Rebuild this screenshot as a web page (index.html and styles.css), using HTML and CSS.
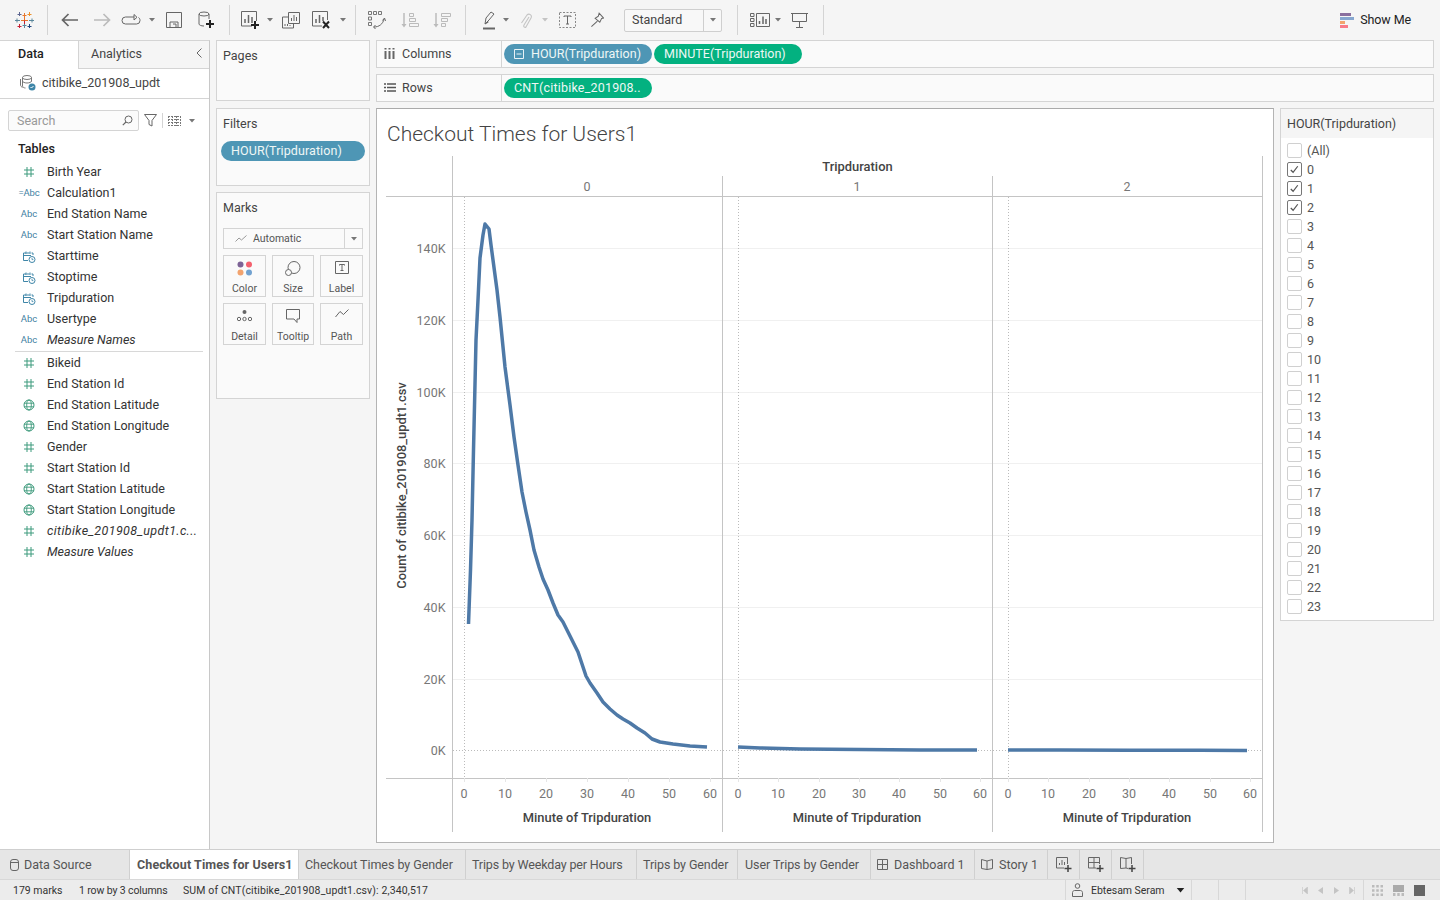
FILE: index.html
```html
<!DOCTYPE html>
<html lang="en">
<head>
<meta charset="utf-8">
<title>Checkout Times for Users1</title>
<link rel="stylesheet" href="styles.css">
</head>
<body>
<svg class="defs" width="0" height="0" aria-hidden="true">
  <symbol id="hash" viewBox="0 0 12 12"><path d="M4 1v10M8 1v10M1 4h10M1 8h10" fill="none" stroke="#3d9a7c" stroke-width="1"/></symbol>
  <symbol id="dt" viewBox="0 0 14 14"><path d="M4 4H1.500v7.500H6M9.500 4H11v2M1.500 6.500H9M4 2.500v2.500M8 2.500v2.500M4.500 4h3" fill="none" stroke="#3f86a8" stroke-width="1"/><circle cx="10" cy="10.500" r="3" fill="#fff" stroke="#3f86a8"/><path d="M10 9v1.600h1.400" fill="none" stroke="#3f86a8" stroke-width=".8"/></symbol>
  <symbol id="globe" viewBox="0 0 12 12"><circle cx="6" cy="6" r="5" fill="none" stroke="#3d9a7c"/><ellipse cx="6" cy="6" rx="2.300" ry="5" fill="none" stroke="#3d9a7c" stroke-width=".9"/><path d="M1 4.200h10M1 7.800h10" stroke="#3d9a7c" stroke-width=".9"/></symbol>
  <symbol id="caret" viewBox="0 0 6 4"><path d="M0 0h6L3 3.500z" fill="#777"/></symbol>
  <symbol id="caretl" viewBox="0 0 6 4"><path d="M0 0h6L3 3.500z" fill="#c4c4c4"/></symbol>
  <symbol id="check" viewBox="0 0 14 14"><path d="M3 7.500l2.500 2.500 5-6.500" fill="none" stroke="#555" stroke-width="1.300"/></symbol>
</svg>

<header class="toolbar">
  <span class="ti w33"><svg width="19" height="19" viewBox="0 0 19 19"><g fill="none"><path d="M9.500 2V7M7.500 4.500h4" stroke="#e8762b"/><path d="M9.500 12v5M7.500 14.500h4" stroke="#5b879b"/><path d="M2 7.500v4M0 9.500h5" stroke="#59879b"/><path d="M17 7.500v4M14 9.500h5" stroke="#59879b"/><path d="M4.500 1v4M2.500 3.500h4" stroke="#5b6591"/><path d="M14.500 1v4M12.500 3.500h4" stroke="#eb912b"/><path d="M4.500 13v4M2.500 15.500h4" stroke="#c72035"/><path d="M14.500 13v4M12.500 15.500h4" stroke="#1f457e"/><path d="M9.500 6v3.500M6 9.500h7" stroke="#e8762b"/><path d="M9.500 9.500V13" stroke="#c72035"/></g></svg></span>
  <i class="sep"></i>
  <span class="ti w32"><svg width="18" height="14" viewBox="0 0 18 14"><path d="M17 7H2M7.500 1L1.500 7l6 6" fill="none" stroke="#666" stroke-width="1.700"/></svg></span>
  <span class="ti w32"><svg width="18" height="14" viewBox="0 0 18 14"><path d="M1 7h15M10.500 1l6 6-6 6" fill="none" stroke="#bbb" stroke-width="1.700"/></svg></span>
  <span class="ti w26"><svg width="20" height="12" viewBox="0 0 20 12"><path d="M13 3H4.500a3.500 3.500 0 0 0 0 7h11a3.500 3.500 0 0 0 3.500-3.500c0-1.500-.6-2.500-1.500-3M13 .5V6l3-2.700z" fill="none" stroke="#666"/></svg></span>
  <span class="ti w16"><svg class="car" viewBox="0 0 6 4"><use href="#caret"/></svg></span>
  <span class="ti w28"><svg width="16" height="16" viewBox="0 0 16 16"><path d="M.5.500h15v15H.5zM4 15.500V10h8v5.500M7 12h3v3.500" fill="none" stroke="#666"/></svg></span>
  <span class="ti w35"><svg width="16" height="18" viewBox="0 0 16 18"><ellipse cx="6" cy="3" rx="5" ry="2" fill="none" stroke="#666"/><path d="M1 3v10c0 1 2 2 5 2M11 3v5" fill="none" stroke="#666"/><path d="M12 9v8M8 13h8" stroke="#222" stroke-width="2"/></svg></span>
  <i class="sep"></i>
  <span class="ti w28"><svg width="19" height="18" viewBox="0 0 19 18"><path d="M11 15H.5V.5h15V10" fill="none" stroke="#666"/><path d="M4 12V8M7.500 12V4M11 12V6" stroke="#666" stroke-width="1.500"/><path d="M14 10v8M10 14h8" stroke="#222" stroke-width="2"/></svg></span>
  <span class="ti w12"><svg class="car" viewBox="0 0 6 4"><use href="#caret"/></svg></span>
  <span class="ti w30"><svg width="18" height="17" viewBox="0 0 18 17"><path d="M6 5H.5v11h11v-4.500" fill="none" stroke="#666"/><path d="M6.500.5h11v11h-11z" fill="#f5f5f5" stroke="#666"/><path d="M9.500 9V6M12 9V3M14.500 9V5M3 14v-2M5.500 14v-2M8 14v-1" stroke="#666"/></svg></span>
  <span class="ti w30"><svg width="19" height="18" viewBox="0 0 19 18"><path d="M10 15H.5V.5h15V9" fill="none" stroke="#666"/><path d="M4 12V8M7.500 12V4M11 10V6" stroke="#666" stroke-width="1.500"/><path d="M11 10.500l6 6.500M17 10.500l-6 6.500" stroke="#222" stroke-width="2"/></svg></span>
  <span class="ti w13"><svg class="car" viewBox="0 0 6 4"><use href="#caret"/></svg></span>
  <i class="sep"></i>
  <span class="ti w30"><svg width="18" height="18" viewBox="0 0 18 18"><path d="M.5.500h3v3h-3zM5.500.500h3v3h-3zM10.500.500h3v3h-3zM.5 6h3v3h-3zM.5 11.500h3v3h-3z" fill="none" stroke="#777"/><path d="M6 16c5 0 9-3 10-8M14.500 9.500L16.500 7l1 3M7.500 14l-2 2 2 2" fill="none" stroke="#666"/></svg></span>
  <span class="ti w36"><svg width="18" height="17" viewBox="0 0 18 17"><path d="M3 1v12" stroke="#bbb" stroke-width="1.500"/><path d="M.5 12L3 15.500 5.500 12z" fill="#bbb"/><path d="M8.500 1.500h4v3h-4zM8.500 6.500h6v3h-6zM8.500 11.500h9v3h-9z" fill="none" stroke="#bbb"/></svg></span>
  <span class="ti w28"><svg width="18" height="17" viewBox="0 0 18 17"><path d="M3 1v12" stroke="#bbb" stroke-width="1.500"/><path d="M.5 12L3 15.500 5.500 12z" fill="#bbb"/><path d="M8.500 1.500h9v3h-9zM8.500 6.500h6v3h-6zM8.500 11.500h4v3h-4z" fill="none" stroke="#bbb"/></svg></span>
  <i class="sep sep-wide"></i>
  <span class="ti w26"><svg width="14" height="19" viewBox="0 0 14 19"><path d="M3 13l1-6 5-6 3 2-5 6z" fill="none" stroke="#666"/><path d="M3 13l3.500-2" stroke="#666"/><path d="M1 17.500h12" stroke="#666" stroke-width="2"/></svg></span>
  <span class="ti w8"><svg class="car" viewBox="0 0 6 4"><use href="#caret"/></svg></span>
  <span class="ti w31"><svg width="12" height="17" viewBox="0 0 12 17"><path d="M9 5L4 13c-1 2 1 3 2 2l5-9c1.500-3-2-5-4-3L1.500 11" fill="none" stroke="#c4c4c4" stroke-width="1.100"/></svg></span>
  <span class="ti w8"><svg class="car" viewBox="0 0 6 4"><use href="#caretl"/></svg></span>
  <span class="ti w36"><svg width="17" height="16" viewBox="0 0 17 16"><rect x=".5" y=".5" width="16" height="15" fill="none" stroke="#888" stroke-dasharray="2 1.500"/><path d="M5 5V4h7v1M8.500 4v8M7 12h3" fill="none" stroke="#666"/></svg></span>
  <span class="ti w24"><svg width="13" height="16" viewBox="0 0 13 16"><path d="M7.500 1l5 4.500-2 .5-1.500 4-5-3.500 3-2.500zM6.500 9L1 15" fill="none" stroke="#666" transform="rotate(5 6 8)"/></svg></span>
  <div class="std"><span class="std-label">Standard</span><span class="std-arrow"><svg class="car" viewBox="0 0 6 4"><use href="#caret"/></svg></span></div>
  <i class="sep sep-after"></i>
  <span class="ti w30"><svg width="20" height="14" viewBox="0 0 20 14"><path d="M.5.500h3.500v3H.5zM.5 5.500h3.500v3H.5zM.5 10.500h3.500v3H.5zM6.500.500h13v13h-13z" fill="none" stroke="#666"/><path d="M9.500 11V8M13 11V3.500M16 11V6" stroke="#666" stroke-width="1.500"/></svg></span>
  <span class="ti w6"><svg class="car" viewBox="0 0 6 4"><use href="#caret"/></svg></span>
  <span class="ti w36"><svg width="17" height="15" viewBox="0 0 17 15"><path d="M0 .5h17M1.500 1v7.500h14V1M8.500 8.500v6M5 14.500h7" fill="none" stroke="#666"/></svg></span>
  <i class="sep"></i>
  <div class="showme">
    <svg width="14" height="15" viewBox="0 0 14 15"><rect y="0" width="11" height="3" fill="#8a6f9e"/><rect y="4" width="14" height="3" fill="#86a6cf"/><rect y="8" width="5" height="3" fill="#f2a36e"/><rect y="12" width="8" height="3" fill="#f87a88"/></svg>
    <span>Show Me</span>
  </div>
</header>

<main class="workspace">
  <aside class="datapane">
    <div class="tabs-data">
      <div class="dtab active">Data</div>
      <div class="dtab rest"><span>Analytics</span><svg width="6" height="10" viewBox="0 0 6 10"><path d="M5.500.5L1 5l4.500 4.500" fill="none" stroke="#666"/></svg></div>
    </div>
    <div class="dsrow">
      <svg width="17" height="17" viewBox="0 0 17 17"><ellipse cx="8" cy="3.500" rx="4.500" ry="2" fill="none" stroke="#777"/><path d="M3.500 3.500v8.500c0 1 1.500 2 3 2M12.500 3.500v4M3.500 7c0 1 2 2 4.500 2s4.500-1 4.500-2M1.500 5v6c0 1 1 2 2 2.500" fill="none" stroke="#777"/><circle cx="13" cy="13" r="3.500" fill="#3f86a8"/><path d="M11.500 13l1 1 2-2" fill="none" stroke="#fff"/></svg>
      <span>citibike_201908_updt</span>
    </div>
    <div class="searchrow">
      <div class="search"><span>Search</span><svg width="11" height="11" viewBox="0 0 11 11"><circle cx="6.500" cy="4.500" r="3.500" fill="none" stroke="#666"/><path d="M4 7L.8 10.200" stroke="#666" stroke-width="1.200"/></svg></div>
      <svg class="filt" width="13" height="13" viewBox="0 0 13 13"><path d="M.5.500h12L8 6.500V12L5 10.500v-4z" fill="none" stroke="#666"/></svg>
      <i class="mini-sep"></i>
      <svg width="13" height="10" viewBox="0 0 13 10"><path d="M0 .5h13M0 3.500h13M0 6.500h13M0 9.500h13M.5 0v10M4.500 0v10M8.500 0v10M12.500 0v10" fill="none" stroke="#777" stroke-dasharray="2 1"/></svg>
      <svg class="sortcar" viewBox="0 0 6 4"><use href="#caret"/></svg>
    </div>
    <div class="tables-h">Tables</div>
    <ul class="fields">
      <li><span class="fi"><svg class="ic12"><use href="#hash"/></svg></span>Birth Year</li>
      <li><span class="fi abc calc">=Abc</span>Calculation1</li>
      <li><span class="fi abc">Abc</span>End Station Name</li>
      <li><span class="fi abc">Abc</span>Start Station Name</li>
      <li><span class="fi"><svg class="ic14"><use href="#dt"/></svg></span>Starttime</li>
      <li><span class="fi"><svg class="ic14"><use href="#dt"/></svg></span>Stoptime</li>
      <li><span class="fi"><svg class="ic14"><use href="#dt"/></svg></span>Tripduration</li>
      <li><span class="fi abc">Abc</span>Usertype</li>
      <li class="em"><span class="fi abc">Abc</span>Measure Names</li>
    </ul>
    <ul class="fields second">
      <li><span class="fi"><svg class="ic12"><use href="#hash"/></svg></span>Bikeid</li>
      <li><span class="fi"><svg class="ic12"><use href="#hash"/></svg></span>End Station Id</li>
      <li><span class="fi"><svg class="ic12"><use href="#globe"/></svg></span>End Station Latitude</li>
      <li><span class="fi"><svg class="ic12"><use href="#globe"/></svg></span>End Station Longitude</li>
      <li><span class="fi"><svg class="ic12"><use href="#hash"/></svg></span>Gender</li>
      <li><span class="fi"><svg class="ic12"><use href="#hash"/></svg></span>Start Station Id</li>
      <li><span class="fi"><svg class="ic12"><use href="#globe"/></svg></span>Start Station Latitude</li>
      <li><span class="fi"><svg class="ic12"><use href="#globe"/></svg></span>Start Station Longitude</li>
      <li class="em long"><span class="fi"><svg class="ic12"><use href="#hash"/></svg></span>citibike_201908_updt1.c...</li>
      <li class="em"><span class="fi"><svg class="ic12"><use href="#hash"/></svg></span>Measure Values</li>
    </ul>
  </aside>

  <section class="cards">
    <div class="card pages"><h2>Pages</h2></div>
    <div class="card filters">
      <h2>Filters</h2>
      <div class="pill blue wide">HOUR(Tripduration)</div>
    </div>
    <div class="card marks">
      <h2>Marks</h2>
      <div class="mark-type">
        <svg width="12" height="7" viewBox="0 0 12 7"><path d="M.5 6.500L4 3l2.500 2L11.500.5" fill="none" stroke="#999"/></svg>
        <span>Automatic</span>
        <span class="mt-arrow"><svg class="car" viewBox="0 0 6 4"><use href="#caret"/></svg></span>
      </div>
      <div class="mark-grid">
        <div class="mbtn"><svg width="16" height="15" viewBox="0 0 16 15"><circle cx="3.500" cy="3.500" r="3" fill="#7d6396"/><circle cx="12" cy="3.500" r="3" fill="#f4606e"/><circle cx="3.500" cy="11.500" r="3" fill="#f2a36e"/><circle cx="12" cy="11.500" r="3" fill="#72a2d0"/></svg><span>Color</span></div>
        <div class="mbtn"><svg width="16" height="15" viewBox="0 0 16 15"><circle cx="9" cy="6.500" r="6" fill="none" stroke="#666"/><circle cx="3.500" cy="11.500" r="3" fill="#fafafa" stroke="#666"/></svg><span>Size</span></div>
        <div class="mbtn"><svg width="14" height="13" viewBox="0 0 14 13"><path d="M.5.500h13v12H.5zM4.500 4.500V3.500h5v1M7 3.500v6M5.500 9.500h3" fill="none" stroke="#666"/></svg><span>Label</span></div>
        <div class="mbtn"><svg width="15" height="13" viewBox="0 0 15 13"><circle cx="7.500" cy="3" r="2" fill="#666"/><circle cx="2" cy="10" r="1.700" fill="none" stroke="#666"/><circle cx="7.500" cy="10" r="1.700" fill="none" stroke="#666"/><circle cx="13" cy="10" r="1.700" fill="none" stroke="#666"/></svg><span>Detail</span></div>
        <div class="mbtn"><svg width="14" height="14" viewBox="0 0 14 14"><path d="M.5.500h13v9.500h-2.500v3.500L8 10H.5z" fill="none" stroke="#666"/></svg><span>Tooltip</span></div>
        <div class="mbtn"><svg width="14" height="9" viewBox="0 0 14 9"><path d="M.5 8L5 2.500l3.500 3L13.500.5" fill="none" stroke="#666"/></svg><span>Path</span></div>
      </div>
    </div>
  </section>

  <section class="viewarea">
    <div class="shelf">
      <div class="shelf-label"><svg width="11" height="11" viewBox="0 0 11 11"><path d="M1.500 3v8M5.500 3v8M9.500 3v8M1.500 0v1.500M5.500 0v1.500M9.500 0v1.500" stroke="#666" stroke-width="2"/></svg><span>Columns</span></div>
      <div class="pill blue hr"><svg width="10" height="10" viewBox="0 0 10 10"><path d="M.5.500h9v9h-9zM2.500 5h5" fill="none" stroke="#e8f2f6"/></svg>HOUR(Tripduration)</div>
      <div class="pill green">MINUTE(Tripduration)</div>
    </div>
    <div class="shelf">
      <div class="shelf-label rows"><svg width="12" height="9" viewBox="0 0 12 9"><path d="M0 1h2M3 1h9M0 4.500h2M3 4.500h9M0 8h2M3 8h9" stroke="#555" stroke-width="1.400"/></svg><span>Rows</span></div>
      <div class="pill green cnt">CNT(citibike_201908..</div>
    </div>
    <div class="stage">
      <div class="sheet">
        <h1>Checkout Times for Users1</h1>
        <svg class="viz" viewBox="377 156 896 685" width="896" height="685">
          <g class="grid">
            <path d="M453 248.500h269M453 320.500h269M453 392.500h269M453 463.500h269M453 535.500h269M453 607.500h269M453 679.500h269"/>
            <path d="M723 248.500h269M723 320.500h269M723 392.500h269M723 463.500h269M723 535.500h269M723 607.500h269M723 679.500h269"/>
            <path d="M993 248.500h269M993 320.500h269M993 392.500h269M993 463.500h269M993 535.500h269M993 607.500h269M993 679.500h269"/>
          </g>
          <path class="zero" d="M453 750.500h809M464.500 197v581M738.500 197v581M1008.500 197v581"/>
          <path class="rule" d="M452.500 156v676M722.500 176v656M992.500 176v656M386 196.500h876M386 778.500h876M1262.500 156v676"/>
          <path class="tick" d="M464.500 778v4M505.500 778v4M546.500 778v4M587.500 778v4M628.500 778v4M669.500 778v4M710.500 778v4M738.500 778v4M778.500 778v4M819.500 778v4M859.500 778v4M899.500 778v4M940.500 778v4M980.500 778v4M1008.500 778v4M1048.500 778v4M1089.500 778v4M1129.500 778v4M1169.500 778v4M1210.500 778v4M1250.500 778v4"/>
          <g class="line">
            <path d="M468.500 624L470.500 570 472 520 473.500 450 476 340 478 300 480 258 483 235 485 224 489 229 491 245 493 260 497 290 500 317 505 367 510 405 514 437 518 465 522 492 526 512 530 530 534 550 539 567 543 579 548 590 553 603 558 615 563 622 568 632 572 640 578 652 583 667 586 676 590 683 597 693 603 702 610 709 617 715 623 719 630 723 637 728 645 733 652 739 660 742 673 744 690 746 707 747"/>
            <path d="M738 747L760 748 800 749 860 749.500 920 750 977 750"/>
            <path d="M1008 750L1060 750 1130 750.300 1200 750.300 1247 750.500"/>
          </g>
          <g class="yt">
            <text x="445.500" y="253">140K</text><text x="445.500" y="325">120K</text><text x="445.500" y="397">100K</text><text x="445.500" y="468">80K</text><text x="445.500" y="540">60K</text><text x="445.500" y="612">40K</text><text x="445.500" y="684">20K</text><text x="445.500" y="755">0K</text>
          </g>
          <g class="xt">
            <text x="464" y="798">0</text><text x="505" y="798">10</text><text x="546" y="798">20</text><text x="587" y="798">30</text><text x="628" y="798">40</text><text x="669" y="798">50</text><text x="710" y="798">60</text>
            <text x="738" y="798">0</text><text x="778" y="798">10</text><text x="819" y="798">20</text><text x="859" y="798">30</text><text x="899" y="798">40</text><text x="940" y="798">50</text><text x="980" y="798">60</text>
            <text x="1008" y="798">0</text><text x="1048" y="798">10</text><text x="1089" y="798">20</text><text x="1129" y="798">30</text><text x="1169" y="798">40</text><text x="1210" y="798">50</text><text x="1250" y="798">60</text>
            <text x="587" y="191">0</text><text x="857" y="191">1</text><text x="1127" y="191">2</text>
          </g>
          <g class="at">
            <text x="857.500" y="171">Tripduration</text>
            <text x="587" y="822">Minute of Tripduration</text><text x="857" y="822">Minute of Tripduration</text><text x="1127" y="822">Minute of Tripduration</text>
            <text transform="translate(406 485.500) rotate(-90)">Count of citibike_201908_updt1.csv</text>
          </g>
        </svg>
      </div>
      <div class="card legend">
        <div class="legend-h">HOUR(Tripduration)</div>
        <ul class="checks">
          <li><i class="cb"></i>(All)</li>
          <li><i class="cb on"><svg viewBox="0 0 14 14"><use href="#check"/></svg></i>0</li>
          <li><i class="cb on"><svg viewBox="0 0 14 14"><use href="#check"/></svg></i>1</li>
          <li><i class="cb on"><svg viewBox="0 0 14 14"><use href="#check"/></svg></i>2</li>
          <li><i class="cb"></i>3</li><li><i class="cb"></i>4</li><li><i class="cb"></i>5</li><li><i class="cb"></i>6</li><li><i class="cb"></i>7</li><li><i class="cb"></i>8</li><li><i class="cb"></i>9</li><li><i class="cb"></i>10</li><li><i class="cb"></i>11</li><li><i class="cb"></i>12</li><li><i class="cb"></i>13</li><li><i class="cb"></i>14</li><li><i class="cb"></i>15</li><li><i class="cb"></i>16</li><li><i class="cb"></i>17</li><li><i class="cb"></i>18</li><li><i class="cb"></i>19</li><li><i class="cb"></i>20</li><li><i class="cb"></i>21</li><li><i class="cb"></i>22</li><li><i class="cb"></i>23</li>
        </ul>
      </div>
    </div>
  </section>
</main>

<nav class="tabbar">
  <div class="tab t-ds"><svg width="9" height="12" viewBox="0 0 9 12"><rect x=".5" y=".5" width="8" height="11" rx="2.500" fill="none" stroke="#666"/><path d="M.5 3.500h8" stroke="#666"/></svg>Data Source</div>
  <div class="tab t-active">Checkout Times for Users1</div>
  <div class="tab t-g">Checkout Times by Gender</div>
  <div class="tab t-w">Trips by Weekday per Hours</div>
  <div class="tab t-tg">Trips by Gender</div>
  <div class="tab t-ug">User Trips by Gender</div>
  <div class="tab t-db"><svg width="11" height="11" viewBox="0 0 11 11"><path d="M.5.500h10v10H.5zM5.500.5v10M.5 5.500h10" fill="none" stroke="#666"/></svg>Dashboard 1</div>
  <div class="tab t-st"><svg width="12" height="11" viewBox="0 0 12 11"><path d="M.5.500l5.500 1.500L11.500.5v9L6 10.500.5 9.500zM6 2v8.500" fill="none" stroke="#666"/></svg>Story 1</div>
  <div class="tab t-add"><svg width="16" height="15" viewBox="0 0 16 15"><path d="M8 11H.5V.5h11V7M3.500 8V6M6 8V3M8.500 8V5" fill="none" stroke="#666"/><path d="M12 8v7M8.500 11.500h7" stroke="#444" stroke-width="1.500"/></svg></div>
  <div class="tab t-add"><svg width="16" height="15" viewBox="0 0 16 15"><path d="M8 11H.5V.5h11V7M6 .5V11M.5 5.500h11" fill="none" stroke="#666"/><path d="M12 8v7M8.500 11.500h7" stroke="#444" stroke-width="1.500"/></svg></div>
  <div class="tab t-add"><svg width="16" height="15" viewBox="0 0 16 15"><path d="M8 11.500L6 11 .5 11.500V.5l5.500 1 5.500-1V7M6 1.500V11" fill="none" stroke="#666"/><path d="M12 8v7M8.500 11.500h7" stroke="#444" stroke-width="1.500"/></svg></div>
  <div class="tab-rest"></div>
</nav>

<footer class="status">
  <span class="s1">179 marks</span>
  <span class="s2">1 row by 3 columns</span>
  <span class="s3">SUM of CNT(citibike_201908_updt1.csv): 2,340,517</span>
  <div class="s-user">
    <svg width="11" height="14" viewBox="0 0 11 14"><circle cx="5.500" cy="3" r="2.300" fill="none" stroke="#666"/><path d="M.5 13.500v-4c0-1 1-2 2-2h6c1 0 2 1 2 2v4z" fill="none" stroke="#666"/></svg>
    <span>Ebtesam Seram</span>
    <svg class="ucar" viewBox="0 0 6 4"><path d="M0 0h6L3 3.500z" fill="#222"/></svg>
  </div>
  <i class="s-cell"></i><i class="s-cell"></i>
  <div class="s-nav">
    <svg width="6" height="7" viewBox="0 0 6 7"><path d="M.5 0v7M5.500 0v7L1.500 3.500z" fill="#c4c4c4" stroke="#c4c4c4" stroke-width=".6"/></svg>
    <svg width="5" height="7" viewBox="0 0 5 7"><path d="M5 0v7L0 3.500z" fill="#c4c4c4"/></svg>
    <svg width="5" height="7" viewBox="0 0 5 7"><path d="M0 0v7l5-3.500z" fill="#c4c4c4"/></svg>
    <svg width="6" height="7" viewBox="0 0 6 7"><path d="M5.500 0v7M.5 0v7l4-3.500z" fill="#c4c4c4" stroke="#c4c4c4" stroke-width=".6"/></svg>
  </div>
  <div class="s-view">
    <svg width="11" height="11" viewBox="0 0 11 11"><path d="M0 1.250h11M0 5.500h11M0 9.750h11" stroke="#bbb" stroke-width="2.500" stroke-dasharray="2.500 1.750"/></svg>
    <svg width="11" height="11" viewBox="0 0 11 11"><path d="M0 3.500h11" stroke="#aaa" stroke-width="7"/><path d="M0 9.500h11" stroke="#bbb" stroke-width="3" stroke-dasharray="2.500 1.750"/></svg>
    <svg width="11" height="11" viewBox="0 0 11 11"><rect width="11" height="11" fill="#666"/></svg>
  </div>
</footer>
</body>
</html>
```

FILE: styles.css
```css
* { box-sizing: border-box; }
html, body { margin: 0; height: 100%; }
body {
  width: 1440px; height: 900px; overflow: hidden;
  display: flex; flex-direction: column;
  background: #f5f5f5; color: #333;
  font: 12.5px Roboto, "Liberation Sans", sans-serif;
}
ul { list-style: none; margin: 0; padding: 0; }
h1, h2 { margin: 0; font-weight: 400; }
.defs { position: absolute; }

/* toolbar */
.toolbar { height: 40px; flex: none; display: flex; align-items: center; padding-left: 8px; background: #f5f5f5; }
.ti { display: flex; align-items: center; justify-content: center; height: 40px; flex: none; }
.w6 { width: 6px; } .w8 { width: 8px; } .w12 { width: 12px; } .w13 { width: 13px; } .w16 { width: 16px; }
.w24 { width: 24px; } .w26 { width: 26px; } .w28 { width: 28px; } .w30 { width: 30px; } .w31 { width: 31px; } .w32 { width: 32px; }
.w33 { width: 33px; } .w35 { width: 35px; } .w36 { width: 36px; }
.car { width: 6px; height: 4px; flex: none; overflow: visible; }
.sep { width: 1px; height: 30px; background: #d4d4d4; margin: 0 6px; flex: none; display: block; }
.sep-wide { margin: 0 10px 0 9px; }
.sep-after { margin: 0 7px 0 15px; }
.std { margin-left: 15px; width: 98px; height: 23px; padding-bottom: 2px; display: flex; align-items: center; border: 1px solid #cfcfcf; border-radius: 2px; background: #f8f8f8; color: #444; flex: none; }
.std-label { flex: 1; padding-left: 7px; }
.std-arrow { width: 18px; height: 21px; margin-bottom: -2px; border-left: 1px solid #cfcfcf; display: flex; align-items: center; justify-content: center; }
.showme { margin-left: auto; margin-right: 29px; display: flex; align-items: center; gap: 6px; color: #222; letter-spacing: -.1px; line-height: 14px; }

/* workspace */
.workspace { flex: 1; min-height: 0; display: flex; }
.datapane { width: 210px; flex: none; background: #fff; border-top: 1px solid #d4d4d4; border-right: 1px solid #c8c8c8; }
.tabs-data { height: 28px; display: flex; padding-bottom: 0; }
.dtab { display: flex; align-items: center; padding-bottom: 3px; }
.dtab.active { width: 79px; padding-left: 18px; font-weight: 500; color: #222; border-right: 1px solid #d4d4d4; }
.dtab.rest { flex: 1; padding: 0 7px 3px 12px; justify-content: space-between; background: #f5f5f5; border-bottom: 1px solid #d4d4d4; color: #444; }
.dsrow { height: 30px; padding: 0 0 3px 19px; display: flex; align-items: center; gap: 6px; border-bottom: 1px solid #d4d4d4; color: #444; }
.searchrow { height: 43px; padding: 0 0 0 8px; display: flex; align-items: center; }
.search { width: 131px; height: 21px; border: 1px solid #d4d4d4; border-radius: 2px; padding: 0 5px 0 8px; display: flex; align-items: center; justify-content: space-between; color: #999; background: #fbfbfb; }
.filt { margin-left: 5px; }
.mini-sep { width: 1px; height: 15px; background: #d4d4d4; margin: 0 5px 0 5px; display: block; }
.sortcar { width: 6px; height: 4px; margin-left: 8px; }
.tables-h { height: 19px; line-height: 14px; padding-left: 18px; font-weight: 500; color: #222; }
.fields li { height: 21px; display: flex; align-items: center; color: #333; white-space: nowrap; }
.fields { border-bottom: 1px solid #d8d8d8; margin: 0 6px 0 15px; padding-bottom: 1px; }
.fields.second { border-bottom: 0; margin: 0; padding: 0 0 0 15px; }
.fi { width: 32px; flex: none; display: flex; justify-content: center; padding-right: 4px; }
.abc { font-size: 9.500px; font-style: normal; color: #3f7fa3; }
.calc { letter-spacing: -.2px; }
.ic12 { width: 12px; height: 12px; }
.ic14 { width: 14px; height: 14px; }
.em { font-style: italic; }
.long { letter-spacing: .38px; }
.long .fi { letter-spacing: 0; }

/* middle */
.cards { width: 154px; flex: none; margin-left: 6px; display: flex; flex-direction: column; }
.card { background: #fafafa; border: 1px solid #d4d4d4; }
.card h2 { font-size: 12.500px; padding: 7px 0 0 6px; line-height: 16px; color: #444; }
.pages { height: 61px; margin-bottom: 7px; }
.filters { height: 78px; margin-bottom: 6px; }
.marks { height: 207px; }
.pill { height: 20px; border-radius: 10px; color: #eef7f5; display: flex; align-items: center; flex: none; white-space: nowrap; padding-bottom: 1px; }
.blue { background: #4e96b5; }
.green { background: #03b180; }
.wide { width: 144px; margin: 9px 0 0 4px; padding-left: 10px; letter-spacing: .1px; }
.mark-type { margin: 12px 6px 0; height: 21px; background: #fafafa; border: 1px solid #d4d4d4; display: flex; align-items: center; padding-left: 11px; font-size: 10.500px; color: #555; }
.mark-type span:first-of-type { margin-left: 6px; flex: 1; }
.mt-arrow { width: 18px; height: 19px; border-left: 1px solid #d4d4d4; display: flex; align-items: center; justify-content: center; flex: none !important; margin: 0 !important; }
.mark-grid { margin: 6px 6px 0; display: grid; grid-template-columns: 43px 42px 43px; column-gap: 6px; row-gap: 6px; }
.mbtn { height: 42px; border: 1px solid #d4d4d4; background: #fafafa; display: flex; flex-direction: column; align-items: center; justify-content: flex-end; padding-bottom: 1px; font-size: 10.500px; color: #555; }
.mbtn svg { margin-bottom: auto; margin-top: 5px; }

/* view */
.viewarea { margin: 0 6px; width: 1058px; flex: none; display: flex; flex-direction: column; }
.shelf { height: 28px; background: #fafafa; border: 1px solid #d4d4d4; margin-bottom: 6px; display: flex; align-items: center; }
.shelf-label { width: 125px; height: 100%; border-right: 1px solid #d4d4d4; padding: 0 0 2px 7px; margin-right: 2px; display: flex; align-items: center; gap: 7px; color: #444; flex: none; }
.shelf-label.rows { gap: 6px; }
.shelf .pill { margin-right: 2px; padding: 0 10px 1px; width: 148px; }
.shelf .pill svg { margin-right: 7px; }
.shelf .hr { letter-spacing: .05px; }
.shelf .cnt { letter-spacing: .2px; }
.stage { display: flex; align-items: flex-start; gap: 6px; }
.sheet { width: 898px; height: 735px; background: #fff; border: 1px solid #b4b4b4; border-top-color: #aaa; }
.sheet h1 { height: 47px; padding: 12px 0 0 10px; font-size: 21px; font-weight: 300; line-height: 26px; color: #444; }
.viz { display: block; }
.grid path { stroke: #f0f0f0; fill: none; }
.zero { stroke: #bbb; stroke-dasharray: 1 2; fill: none; }
.rule { stroke: #c4c4c4; fill: none; }
.tick { stroke: #e6e6e6; fill: none; }
.line path { fill: none; stroke: #4e79a7; stroke-width: 3.500; stroke-linejoin: round; stroke-linecap: butt; }
.yt text { text-anchor: end; fill: #777; font-size: 12.500px; }
.xt text { text-anchor: middle; fill: #777; font-size: 12.500px; }
.at text { text-anchor: middle; fill: #444; font-size: 12.900px; font-weight: 500; }
.legend { width: 154px; height: 513px; background: #fff; }
.legend-h { height: 29px; background: #f5f5f5; padding-left: 6px; display: flex; align-items: center; color: #444; }
.checks { padding-top: 3px; }
.checks li { height: 19px; display: flex; align-items: center; gap: 5px; padding-left: 6px; color: #555; }
.cb { width: 15px; height: 15px; border: 1px solid #d0d0d0; border-radius: 2px; background: #fff; display: block; flex: none; }
.cb.on { border-color: #777; }
.cb svg { display: block; width: 13px; height: 13px; }

/* tabs */
.tabbar { height: 31px; flex: none; display: flex; background: #e6e6e6; border-top: 1px solid #cfcfcf; border-bottom: 1px solid #d8d8d8; color: #555; }
.tab { border-right: 1px solid #d0d0d0; display: flex; align-items: center; padding-left: 6px; gap: 6px; flex: none; white-space: nowrap; }
.t-ds { width: 130px; padding-left: 10px; gap: 5px; }
.t-active { width: 169px; padding-left: 7px; background: #fff; font-weight: 700; color: #555; letter-spacing: .1px; }
.t-g { width: 167px; letter-spacing: -.05px; }
.t-w { width: 171px; letter-spacing: -.15px; }
.t-tg { width: 101px; letter-spacing: -.1px; }
.t-ug { width: 133px; padding-left: 7px; letter-spacing: -.05px; }
.t-db { width: 104px; }
.t-st { width: 73px; }
.t-add { width: 32px; justify-content: center; padding-left: 0; }
.tab-rest { flex: 1; }

/* status */
.status { height: 20px; flex: none; display: flex; align-items: center; background: #ececec; font-size: 10.500px; color: #333; }
.status .s1 { width: 79px; padding-left: 13px; }
.status .s2 { width: 104px; letter-spacing: -.12px; }
.status .s3 { width: 882px; letter-spacing: .12px; }
.s-user { width: 127px; height: 100%; border-left: 1px solid #d8d8d8; border-right: 1px solid #d8d8d8; display: flex; align-items: center; padding-left: 6px; gap: 8px; flex: none; letter-spacing: -.03px; }
.ucar { width: 9px; height: 5px; margin-left: 3px; }
.s-cell { width: 27px; height: 100%; border-right: 1px solid #d8d8d8; display: block; flex: none; }
.s-nav { width: 118px; height: 100%; border-right: 1px solid #d8d8d8; display: flex; align-items: center; justify-content: flex-end; gap: 10.500px; padding-right: 8px; flex: none; }
.s-view { display: flex; align-items: center; gap: 10px; padding-left: 8px; }
```
